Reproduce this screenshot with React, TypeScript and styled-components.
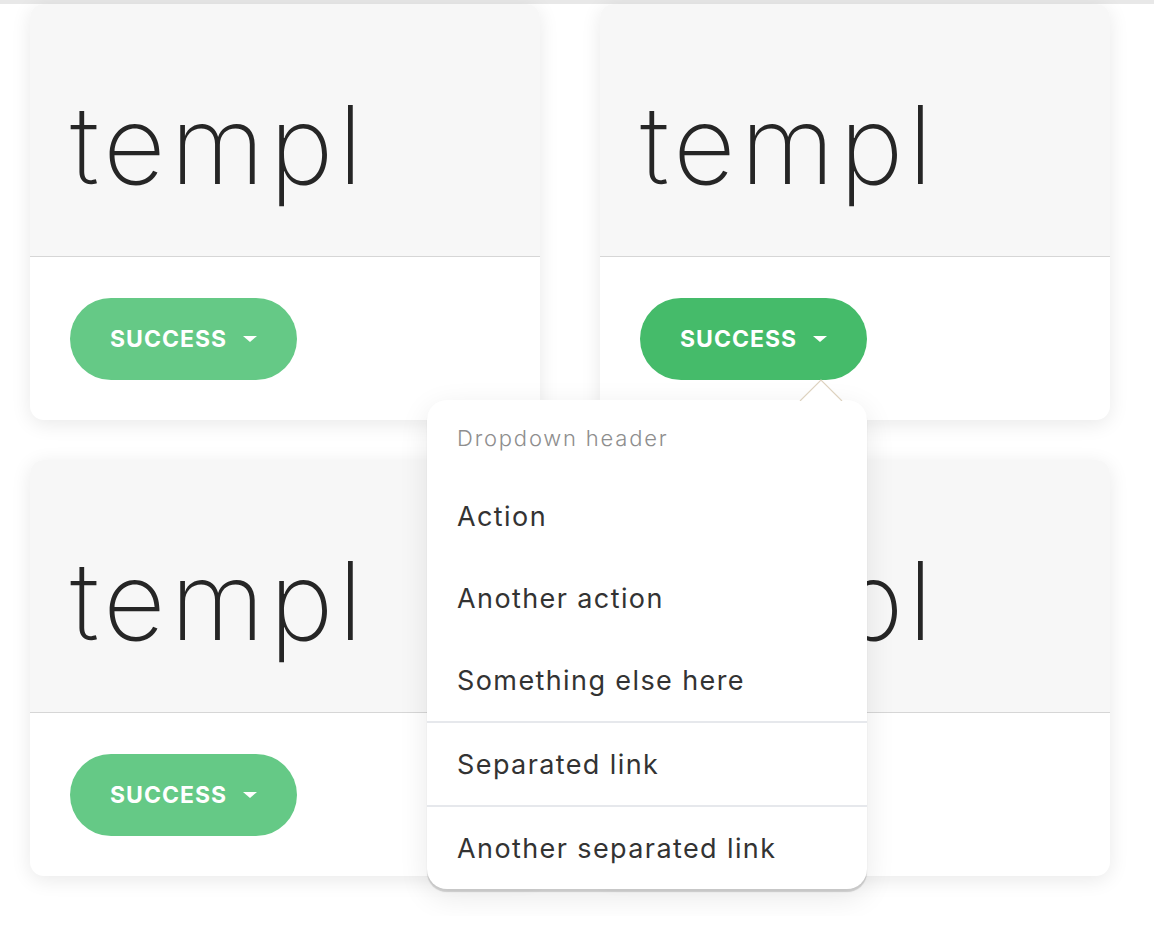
import * as React from 'react';
import styled, { createGlobalStyle } from 'styled-components';

const GlobalStyle = createGlobalStyle`
  html, body {
    margin: 0;
    padding: 0;
    background: #ffffff;
    font-family: Inter, "Open Sans", "Liberation Sans", sans-serif;
  }
`;

const TopBar = styled.div`
  height: 4px;
  background: #e8e8e8;
`;

const Grid = styled.div`
  display: grid;
  grid-template-columns: 510px 510px;
  column-gap: 60px;
  row-gap: 40px;
  padding: 0 0 40px 30px;
`;

const Card = styled.div`
  background: #ffffff;
  border-radius: 14px;
  box-shadow: 0 4px 20px rgba(0, 0, 0, 0.09);
`;

const CardHeader = styled.div`
  height: 253px;
  background: #f7f7f7;
  border-bottom: 1px solid #d6d6d6;
  border-radius: 14px 14px 0 0;
  display: flex;
  align-items: center;
  padding: 30px 40px 0;
  box-sizing: border-box;
`;

const Title = styled.h1`
  margin: 0;
  font-size: 108px;
  font-weight: 200;
  letter-spacing: 5px;
  line-height: 1;
  color: #262626;
`;

const CardBody = styled.div`
  padding: 41px 40px 40px;
`;

const ToggleWrap = styled.div`
  position: relative;
  display: inline-block;
`;

const Toggle = styled.button<{ $active?: boolean }>`
  height: 82px;
  padding: 0 40px;
  border: none;
  border-radius: 41px;
  background: ${(p) => (p.$active ? '#45bb6a' : '#65c986')};
  color: #ffffff;
  font-family: inherit;
  font-size: 23px;
  font-weight: 700;
  letter-spacing: 1px;
  display: flex;
  align-items: center;
  cursor: pointer;
`;

const Caret = styled.span`
  margin-left: 16px;
  width: 0;
  height: 0;
  border-top: 6px solid #ffffff;
  border-left: 7px solid transparent;
  border-right: 7px solid transparent;
`;

const Menu = styled.div`
  position: absolute;
  top: calc(100% + 20px);
  right: 0;
  width: 440px;
  background: #ffffff;
  border-radius: 20px;
  box-shadow: 0 3px 1px rgba(0, 0, 0, 0.16), 0 8px 30px rgba(0, 0, 0, 0.09);
  z-index: 10;
`;

const Arrow = styled.svg`
  position: absolute;
  top: -21px;
  right: 24px;
`;

const MenuHeader = styled.div`
  height: 75px;
  display: flex;
  align-items: center;
  padding: 0 30px;
  font-size: 22px;
  font-weight: 300;
  letter-spacing: 1.8px;
  color: #8e8e8e;
`;

const MenuItem = styled.a`
  height: 82px;
  display: flex;
  align-items: center;
  padding: 0 30px;
  font-size: 27px;
  font-weight: 400;
  letter-spacing: 1.4px;
  color: #333333;
  text-decoration: none;
`;

const Divider = styled.div`
  height: 2px;
  background: #e6e8ec;
`;

const Dropdown: React.FC<{ active?: boolean; open?: boolean }> = ({ active, open }) => (
  <ToggleWrap>
    <Toggle $active={active}>
      SUCCESS
      <Caret />
    </Toggle>
    {open && (
      <Menu>
        <Arrow width="44" height="22" viewBox="0 0 44 22">
          <path d="M1 22 L22 1 L43 22" fill="#ffffff" stroke="#ddd2bf" strokeWidth="1.2" />
        </Arrow>
        <MenuHeader>Dropdown header</MenuHeader>
        <MenuItem href="#">Action</MenuItem>
        <MenuItem href="#">Another action</MenuItem>
        <MenuItem href="#">Something else here</MenuItem>
        <Divider />
        <MenuItem href="#">Separated link</MenuItem>
        <Divider />
        <MenuItem href="#">Another separated link</MenuItem>
      </Menu>
    )}
  </ToggleWrap>
);

const TemplCard: React.FC<{ active?: boolean; open?: boolean }> = ({ active, open }) => (
  <Card>
    <CardHeader>
      <Title>templ</Title>
    </CardHeader>
    <CardBody>
      <Dropdown active={active} open={open} />
    </CardBody>
  </Card>
);

export default function App() {
  return (
    <>
      <GlobalStyle />
      <TopBar />
      <Grid>
        <TemplCard />
        <TemplCard active open />
        <TemplCard />
        <TemplCard />
      </Grid>
    </>
  );
}
